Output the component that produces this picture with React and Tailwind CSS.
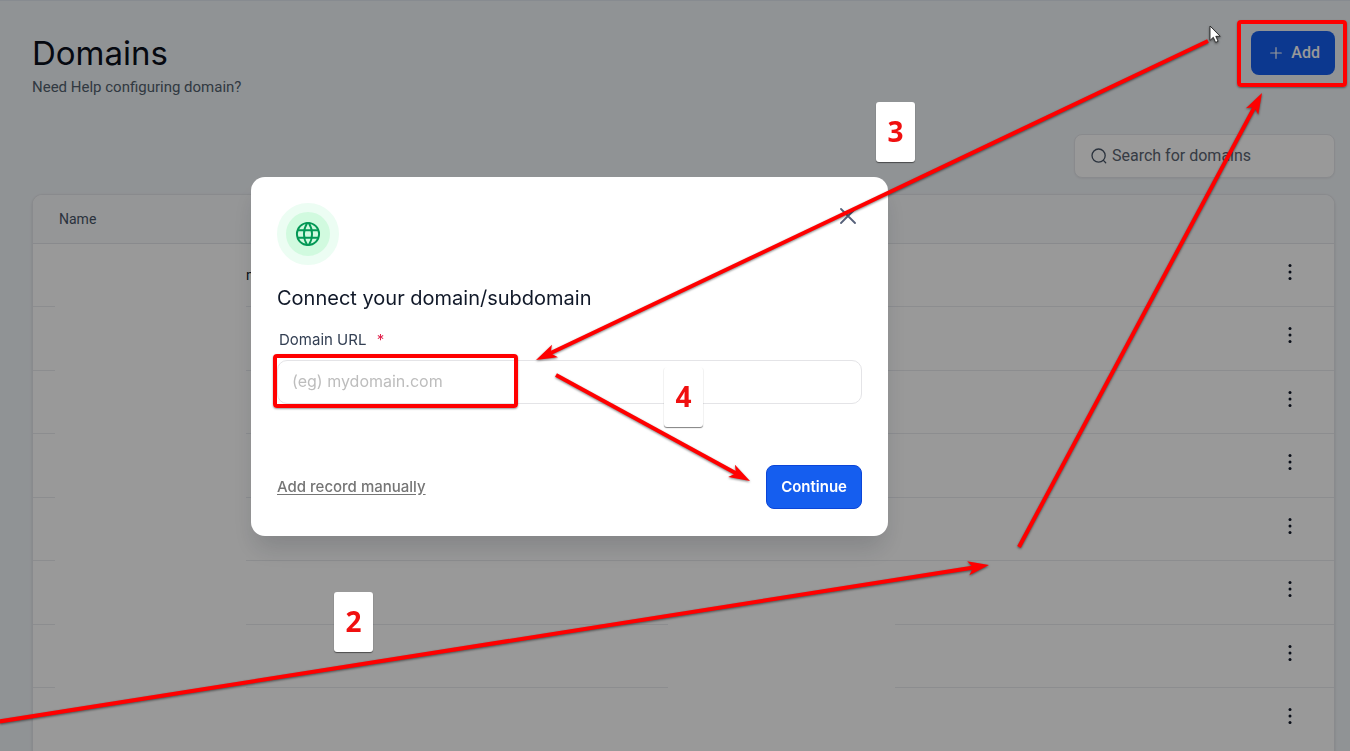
import React, { useState } from 'react';

const ROWS = [
  { id: 1, domain: 'n' },
  { id: 2, domain: '' },
  { id: 3, domain: '' },
  { id: 4, domain: '' },
  { id: 5, domain: '' },
  { id: 6, domain: '', statusHidden: true },
  { id: 7, domain: '', statusHidden: true },
  { id: 8, domain: '' },
];

const ARROWS = [
  { from: [-4, 722], to: [989, 565] },
  { from: [1019, 547], to: [1262, 93] },
  { from: [1208, 41], to: [536, 360] },
  { from: [556, 375], to: [750, 481] },
];

function PlusIcon() {
  return (
    <svg width="12" height="12" viewBox="0 0 12 12" fill="none" stroke="currentColor" strokeWidth="1.2" strokeLinecap="round">
      <path d="M6 0.7v10.6M0.7 6h10.6" />
    </svg>
  );
}

function SearchIcon() {
  return (
    <svg width="16" height="16" viewBox="0 0 16 16" fill="none" stroke="currentColor" strokeWidth="1.3" strokeLinecap="round">
      <circle cx="7.6" cy="7.6" r="6.6" />
      <path d="M12.4 12.4l2.3 2.3" />
    </svg>
  );
}

function DotsIcon() {
  return (
    <svg width="4" height="16" viewBox="0 0 4 16" fill="currentColor">
      <circle cx="2" cy="1.6" r="1.5" />
      <circle cx="2" cy="8" r="1.5" />
      <circle cx="2" cy="14.4" r="1.5" />
    </svg>
  );
}

function GlobeIcon() {
  return (
    <svg width="26" height="26" viewBox="0 0 26 26" fill="none" stroke="currentColor" strokeWidth="1.9">
      <circle cx="13" cy="13" r="11.1" />
      <path d="M2.5 9.2h21M2.5 16.8h21" />
      <path d="M12.4 1.8c-4.6 6.9-4.6 15.5 0 22.4M13.6 1.8c4.6 6.9 4.6 15.5 0 22.4" />
    </svg>
  );
}

function CloseIcon() {
  return (
    <svg width="16" height="16" viewBox="0 0 16 16" fill="none" stroke="currentColor" strokeWidth="1.8" strokeLinecap="round">
      <path d="M1 1l14 14M15 1L1 15" />
    </svg>
  );
}

// Line with a notched head, drawn along the from -> to direction
function Arrow({ from, to }) {
  const [x1, y1] = from;
  const [x2, y2] = to;
  const len = Math.hypot(x2 - x1, y2 - y1);
  const ux = (x2 - x1) / len;
  const uy = (y2 - y1) / len;
  const at = (back, side) => `${x2 - ux * back - uy * side},${y2 - uy * back + ux * side}`;

  return (
    <g>
      <line x1={x1} y1={y1} x2={x2 - ux * 14} y2={y2 - uy * 14} stroke="#ff0000" strokeWidth="4" />
      <polygon points={[at(0, 0), at(21, 7), at(16, 0), at(21, -7)].join(' ')} fill="#ff0000" />
    </g>
  );
}

function StepLabel({ n, className }) {
  return (
    <div
      className={`absolute flex h-[60px] w-[39px] justify-center rounded-[3px] bg-white pt-[10px] font-['Open_Sans',sans-serif] text-[28px] leading-[38px] font-bold text-[#f01010] shadow-[0_1px_1px_rgba(0,0,0,0.5)] ${className}`}
    >
      {n}
    </div>
  );
}

function DomainTable() {
  return (
    <div className="mt-[16px] overflow-hidden rounded-t-[10px] border border-b-0 border-gray-200 bg-white shadow-sm">
      <table className="w-full table-fixed border-collapse text-left">
        <colgroup>
          <col className="w-[22px]" />
          <col className="w-[191px]" />
          <col className="w-[422px]" />
          <col className="w-[227px]" />
          <col />
          <col className="w-[88px]" />
        </colgroup>
        <thead className="bg-[#f9fafc]">
          <tr className="h-12 border-b border-gray-200">
            <th colSpan={6} className="pl-[26px] font-['Roboto',sans-serif] text-sm font-normal text-[#475467]">
              Name
            </th>
          </tr>
        </thead>
        <tbody>
          {ROWS.map((row) => (
            <tr key={row.id} className="odd:h-[63px] even:h-[64px]">
              <td className="border-b border-[#e9ebef]" />
              <td />
              <td className="border-b border-[#e9ebef] font-['Roboto',sans-serif] text-sm text-gray-900">{row.domain}</td>
              <td className={row.statusHidden ? '' : 'border-b border-[#e9ebef]'} />
              <td className="border-b border-[#e9ebef]" />
              <td className="border-b border-[#e9ebef] pb-[6px]">
                <button type="button" aria-label="Row actions" className="mx-auto flex px-2 text-[#101828]">
                  <DotsIcon />
                </button>
              </td>
            </tr>
          ))}
        </tbody>
      </table>
    </div>
  );
}

function ConnectDialog() {
  const [url, setUrl] = useState('');

  return (
    <div
      role="dialog"
      aria-labelledby="dialog-title"
      className="relative w-[637px] rounded-[14px] bg-white px-[26px] pt-[26px] pb-[27px] shadow-[0_16px_24px_-4px_rgba(16,24,40,0.16)]"
    >
      <button type="button" aria-label="Close" className="absolute top-[31px] right-8 text-[#56617a]">
        <CloseIcon />
      </button>

      <div className="flex size-[62px] items-center justify-center rounded-full border-[9px] border-[#ecfdf3] bg-[#d1fadf] text-[#039855]">
        <GlobeIcon />
      </div>

      <h2 id="dialog-title" className="mt-[19px] text-xl leading-7 text-[#101828]">
        Connect your domain/subdomain
      </h2>

      <label htmlFor="domain-url" className="mt-4 block pl-[2px] text-[15px] leading-6 text-[#344054]">
        Domain URL <span className="ml-[6px] text-[#e11d48]">*</span>
      </label>
      <input
        id="domain-url"
        type="text"
        value={url}
        onChange={(e) => setUrl(e.target.value)}
        placeholder="(eg) mydomain.com"
        className="mt-2 block h-11 w-full rounded-[10px] border border-[#e4e4e7] px-[14px] pb-[2px] text-base text-[#101828] placeholder:text-[#bdbdbd]"
      />

      <div className="mt-[61px] flex items-center justify-between">
        <a href="#manual" className="text-[15px] font-medium text-[#757575] underline underline-offset-2">
          Add record manually
        </a>
        <button type="button" className="h-11 rounded-lg border border-[#0b45d8] bg-[#155eef] px-[14px] text-[15px] font-semibold text-white">
          Continue
        </button>
      </div>
    </div>
  );
}

export default function App() {
  const [search, setSearch] = useState('');

  return (
    <div className="relative h-screen overflow-hidden border-t border-slate-200 bg-slate-100 font-['Inter',sans-serif]">
      <main className="pt-[30px] pr-[15px] pl-[32px]">
        <header className="flex items-start justify-between">
          <div>
            <h1 className="text-[33px] leading-[44px] text-[#0a0f1c]">Domains</h1>
            <p className="font-['Roboto',sans-serif] text-[15px] leading-6 text-[#52606d]">Need Help configuring domain?</p>
          </div>
          <button
            type="button"
            className="flex h-11 items-center gap-[9px] rounded-lg bg-[#155eef] pr-[15px] pl-[19px] font-['Roboto',sans-serif] text-base font-medium text-white"
          >
            <PlusIcon />
            Add
          </button>
        </header>

        <div className="mt-[35px] flex justify-end">
          <label className="flex h-11 w-[261px] items-center gap-[5px] rounded-lg border border-gray-200 bg-white pl-4 text-[#475467] shadow-xs">
            <SearchIcon />
            <input
              type="text"
              aria-label="Search for domains"
              value={search}
              onChange={(e) => setSearch(e.target.value)}
              placeholder="Search for domains"
              className="min-w-0 flex-1 font-['Roboto',sans-serif] text-base placeholder:text-[#5b6472]"
            />
          </label>
        </div>

        <DomainTable />
      </main>

      <div className="fixed inset-0 flex items-center justify-center bg-black/40 pr-[211px] pb-[38px]">
        <ConnectDialog />
      </div>

      {/* Walkthrough annotations */}
      <div className="pointer-events-none absolute inset-0">
        <StepLabel n="2" className="top-[591px] left-[334px]" />
        <StepLabel n="3" className="top-[101px] left-[876px]" />
        <StepLabel n="4" className="top-[366px] left-[664px]" />
        <div className="absolute top-[19px] left-[1237px] h-[67px] w-[110px] rounded-[4px] border-4 border-[#ff0000] shadow-[0_1px_2px_rgba(0,0,0,0.4)]" />
        <div className="absolute top-[353px] left-[273px] h-[54px] w-[245px] rounded-[4px] border-4 border-[#ff0000] shadow-[0_1px_2px_rgba(0,0,0,0.4)]" />
        <svg
          width="1350"
          height="751"
          viewBox="0 1 1350 751"
          className="absolute top-0 left-0 drop-shadow-[0_1px_1px_rgba(0,0,0,0.5)]"
        >
          {ARROWS.map((a) => (
            <Arrow key={a.to.join()} from={a.from} to={a.to} />
          ))}
          <path
            d="M1210 26v14.4l3.3-3.1 2.3 5.1 2.5-1.1-2.3-5h4.4z"
            fill="#fff"
            stroke="#222"
            strokeWidth="0.9"
            strokeLinejoin="round"
          />
        </svg>
      </div>
    </div>
  );
}
